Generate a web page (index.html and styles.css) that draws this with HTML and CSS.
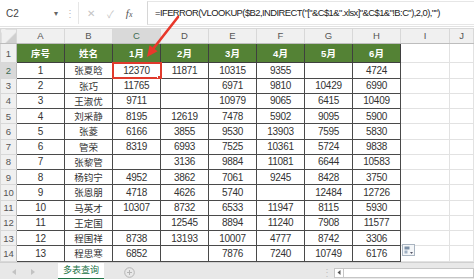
FILE: index.html
```html
<!DOCTYPE html>
<html lang="zh-CN">
<head>
    <meta charset="UTF-8">
    <title>多表查询</title>
    <link rel="stylesheet" href="styles.css">
</head>
<body>
    <div class="app">
        <div class="formula-bar">
            <div class="name-box"><span>C2</span><span class="caret">▾</span></div>
            <div class="grip">⋮</div>
            <div class="tools"><span>✕</span><span>✓</span><span class="fx">f<i>x</i></span></div>
            <div class="formula">=IFERROR(VLOOKUP($B2,INDIRECT("["&amp;C$1&amp;".xlsx]"&amp;C$1&amp;"!B:C"),2,0),"")</div>
        </div>

        <div class="sheet">
            <table class="grid">
                <colgroup>
                    <col class="c-head"><col class="c-std"><col class="c-std"><col class="c-std"><col class="c-std">
                    <col class="c-std"><col class="c-std"><col class="c-std"><col class="c-std"><col class="c-i"><col>
                </colgroup>
                <tr class="letters">
                    <th class="corner"></th><th>A</th><th>B</th><th class="on">C</th><th>D</th><th>E</th><th>F</th><th>G</th><th>H</th><th>I</th><th>J</th>
                </tr>
                <tr class="title">
                    <th class="num">1</th><td>序号</td><td>姓名</td><td>1月</td><td>2月</td><td>3月</td><td>4月</td><td>5月</td><td>6月</td><td class="out"></td><td class="out"></td>
                </tr>
                <tr><th class="num on">2</th><td>1</td><td class="cn">张夏晗</td><td class="sel">12370</td><td>11871</td><td>10315</td><td>9355</td><td></td><td>4724</td><td class="out"></td><td class="out"></td></tr>
                <tr><th class="num">3</th><td>2</td><td class="cn">张巧</td><td>11765</td><td></td><td>6971</td><td>9810</td><td>10429</td><td>6990</td><td class="out"></td><td class="out"></td></tr>
                <tr><th class="num">4</th><td>3</td><td class="cn">王淑优</td><td>9711</td><td></td><td>10979</td><td>9065</td><td>6415</td><td>10409</td><td class="out"></td><td class="out"></td></tr>
                <tr><th class="num">5</th><td>4</td><td class="cn">刘采静</td><td>8195</td><td>12619</td><td>7478</td><td>5902</td><td>9095</td><td>5900</td><td class="out"></td><td class="out"></td></tr>
                <tr><th class="num">6</th><td>5</td><td class="cn">张菱</td><td>6166</td><td>3855</td><td>9530</td><td>13903</td><td>7595</td><td>5830</td><td class="out"></td><td class="out"></td></tr>
                <tr><th class="num">7</th><td>6</td><td class="cn">管荣</td><td>8319</td><td>6993</td><td>7525</td><td>10361</td><td>5724</td><td>9838</td><td class="out"></td><td class="out"></td></tr>
                <tr><th class="num">8</th><td>7</td><td class="cn">张黎管</td><td></td><td>3136</td><td>9884</td><td>11081</td><td>6644</td><td>10583</td><td class="out"></td><td class="out"></td></tr>
                <tr><th class="num">9</th><td>8</td><td class="cn">杨钧宁</td><td>4952</td><td>3862</td><td>7061</td><td>9245</td><td>8428</td><td>3750</td><td class="out"></td><td class="out"></td></tr>
                <tr><th class="num">10</th><td>9</td><td class="cn">张恩朋</td><td>4718</td><td>4626</td><td>5740</td><td></td><td>12484</td><td>12726</td><td class="out"></td><td class="out"></td></tr>
                <tr><th class="num">11</th><td>10</td><td class="cn">马英才</td><td>10307</td><td>8732</td><td>6533</td><td>11947</td><td>8115</td><td>5930</td><td class="out"></td><td class="out"></td></tr>
                <tr><th class="num">12</th><td>11</td><td class="cn">王定国</td><td></td><td>12545</td><td>8894</td><td>11240</td><td>7908</td><td>11577</td><td class="out"></td><td class="out"></td></tr>
                <tr><th class="num">13</th><td>12</td><td class="cn">程国祥</td><td>8738</td><td>13193</td><td>10007</td><td>4777</td><td>8742</td><td>3306</td><td class="out"></td><td class="out"></td></tr>
                <tr><th class="num">14</th><td>13</td><td class="cn">程思寒</td><td>6852</td><td></td><td>7876</td><td>7240</td><td>10749</td><td>6176</td><td class="out"></td><td class="out"></td></tr>
                <tr class="blank"><th class="num">15</th><td class="out"></td><td class="out"></td><td class="out"></td><td class="out"></td><td class="out"></td><td class="out"></td><td class="out"></td><td class="out"></td><td class="out"></td><td class="out"></td></tr>
            </table>
        </div>

        <div class="tabs">
            <div class="nav">
                <svg width="5" height="6" viewBox="0 0 5 6"><path d="M4 0 L0 3 L4 6 Z" fill="#c2c2c2"/></svg>
                <svg width="5" height="6" viewBox="0 0 5 6"><path d="M1 0 L5 3 L1 6 Z" fill="#c2c2c2"/></svg>
            </div>
            <div class="tab">多表查询</div>
            <div class="add">
                <svg width="11" height="11" viewBox="0 0 11 11"><circle cx="5.5" cy="5.5" r="4.8" fill="none" stroke="#b5b5b5"/><path d="M5.5 3 V8 M3 5.5 H8" stroke="#b5b5b5"/></svg>
            </div>
            <div class="spacer"></div>
            <div class="grip">⋮</div>
            <div class="hscroll">
                <span class="btn"><svg width="4" height="5" viewBox="0 0 4 5"><path d="M3.5 0 L0.5 2.5 L3.5 5 Z" fill="#555"/></svg></span>
                <span class="track"></span>
            </div>
        </div>

        <!-- overlays -->
        <svg class="arrow" width="474" height="279" viewBox="0 0 474 279">
            <line x1="178" y1="17" x2="153.6" y2="48.2" stroke="#e8382b" stroke-width="2.6" stroke-linecap="round"/>
            <polygon points="147,57 157.6,51.2 149.6,45.2" fill="#e8382b"/>
        </svg>
        <svg class="paste" width="13" height="12" viewBox="0 0 13 12">
            <rect x="0.5" y="0.5" width="12" height="11" fill="#f4f6f8" stroke="#a9b4c0"/>
            <rect x="2.5" y="2.5" width="5" height="3" fill="#7b8fa6"/>
            <rect x="2.5" y="6.5" width="3" height="3" fill="#9fb0c2"/>
            <path d="M8 8 L11 8 L9.5 10 Z" fill="#556"/>
        </svg>
    </div>
</body>
</html>
```

FILE: styles.css
```css
body {
    margin: 0;
    padding: 0;
    background-color: #fff;
    font-family: "Liberation Sans", "Noto Sans CJK SC", sans-serif;
    color: #333;
}
.app {
    position: relative;
    width: 474px;
    height: 279px;
    overflow: hidden;
    background-color: #fff;
}

/* formula bar */
.formula-bar {
    display: flex;
    align-items: center;
    height: 26px;
    border-bottom: 1px solid #e2e2e2;
    font-size: 10px;
    color: #444;
}
.name-box {
    display: flex;
    justify-content: space-between;
    align-items: center;
    width: 52px;
    padding: 0 4px 0 6px;
}
.caret {
    font-size: 8px;
    color: #666;
}
.grip {
    width: 16px;
    text-align: center;
    color: #bbb;
    font-size: 10px;
}
.tools {
    display: flex;
    align-items: center;
    gap: 12px;
    height: 22px;
    padding: 0 0 0 8px;
    width: 60px;
    border-left: 1px solid #e6e6e6;
    color: #c4c4c4;
    font-size: 10px;
}
.tools .fx {
    color: #555;
    font-family: "Liberation Serif", serif;
    font-style: italic;
    font-size: 11px;
}
.tools .fx i {
    font-size: 8px;
}
.formula {
    flex: 1;
    height: 22px;
    line-height: 22px;
    padding-left: 7px;
    border-left: 1px solid #d6d6d6;
    border-top: 1px solid #e6e6e6;
    border-bottom: 1px solid #e6e6e6;
    white-space: nowrap;
    overflow: hidden;
    color: #222;
    font-size: 9.4px;
    letter-spacing: -0.55px;
}

/* sheet grid */
.sheet {
    height: 234px;
    overflow: hidden;
    margin-top: 1px;
}
.grid {
    border-collapse: collapse;
    table-layout: fixed;
    width: 474px;
}
.c-head { width: 16px; }
.c-std { width: 48px; }
.c-i { width: 49px; }
.grid th {
    background-color: #f0f0f0;
    color: #555;
    font-weight: normal;
    font-size: 9.5px;
    border: 1px solid #d8d8d8;
    padding: 0;
}
.grid th.on {
    background-color: #d9d9d9;
    color: #3d6b52;
}
.letters {
    height: 11px;
}
.letters th {
    line-height: 10px;
    border-bottom-color: #bdbdbd;
}
.grid th.corner {
    background: linear-gradient(135deg, #f0f0f0 60%, #cfcfcf 61%);
}
.grid th.num {
    text-align: center;
    border-right-color: #bdbdbd;
}
.grid td {
    padding: 0;
    text-align: center;
    font-size: 10px;
    letter-spacing: -0.3px;
    border: 1px solid #4a4a4a;
    white-space: nowrap;
    overflow: hidden;
}
.grid td.cn {
    font-size: 9.5px;
    letter-spacing: 0;
}
.grid td.out {
    border-color: #e2e2e2;
}
.grid tr {
    height: 15.25px;
}
.grid tr.title {
    height: 19px;
}
.title td {
    background-color: #548235;
    color: #fff;
    font-weight: bold;
    font-size: 9.5px;
    letter-spacing: 0;
    border-color: #3f3f3f;
}
.title td.out {
    background-color: #fff;
}
.grid td.sel {
    position: relative;
    outline: 2px solid #e03a2c;
    outline-offset: -1px;
}
.grid td.sel::after {
    content: "";
    position: absolute;
    right: -2px;
    bottom: -2px;
    width: 3px;
    height: 3px;
    background-color: #e03a2c;
    border: 1px solid #fff;
}

/* sheet tabs */
.tabs {
    display: flex;
    align-items: stretch;
    height: 18px;
    background-color: #e8e8e8;
    border-top: 1px solid #d0d0d0;
    font-size: 10px;
}
.nav {
    display: flex;
    gap: 13px;
    align-items: center;
    width: 46px;
    padding-left: 12px;
}
.tab {
    width: 46px;
    background-color: #fff;
    color: #217346;
    text-align: center;
    line-height: 15px;
    border-bottom: 3px solid #217346;
    font-size: 9px;
}
.add {
    display: flex;
    align-items: center;
    margin-left: 20px;
}
.spacer {
    flex: 1;
}
.tabs .grip {
    align-self: center;
    width: 14px;
    color: #c0c0c0;
}
.hscroll {
    display: flex;
    align-items: center;
    width: 140px;
    padding-top: 1px;
}
.hscroll .btn {
    display: flex;
    align-items: center;
    justify-content: center;
    width: 8px;
    height: 8px;
    background-color: #fff;
    border: 1px solid #c6c6c6;
}
.hscroll .track {
    flex: 1;
    height: 8px;
    background-color: #fff;
    border: 1px solid #c6c6c6;
    border-left: none;
}

/* overlays */
.arrow {
    position: absolute;
    left: 0;
    top: 0;
    pointer-events: none;
}
.paste {
    position: absolute;
    left: 402px;
    top: 244px;
}
```
